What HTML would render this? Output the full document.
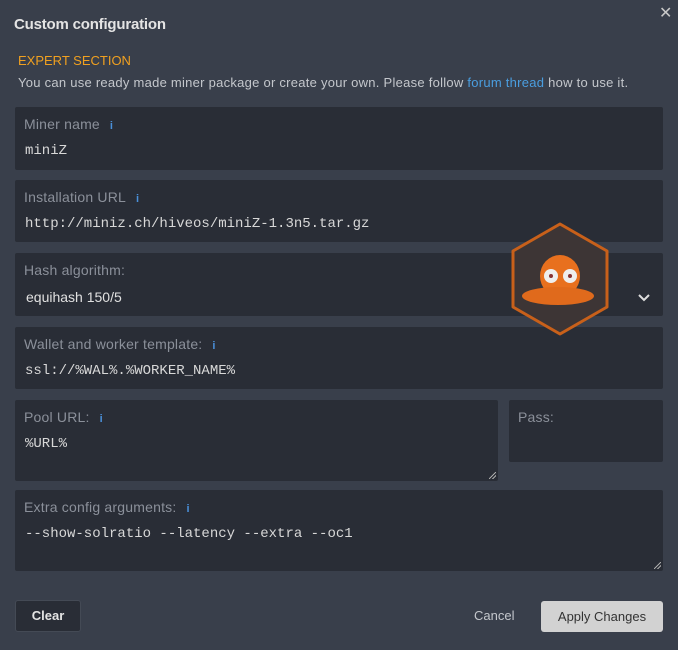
<!DOCTYPE html>
<html><head><meta charset="utf-8"><style>
*{margin:0;padding:0;box-sizing:border-box}
body{width:678px;height:650px;background:#393f4b;font-family:"Liberation Sans",sans-serif;position:relative;overflow:hidden;color:#ddd}
.a{position:absolute}
.f{position:absolute;background:#292d36;border-radius:2px}
.l{position:absolute;left:9px;top:9px;font-size:14px;color:#8b909a;letter-spacing:0.2px}
.l i{font-style:normal;color:#4a90d9;font-size:11px;margin-left:10px;font-weight:bold}
.v{position:absolute;left:10px;font-family:"Liberation Mono",monospace;font-size:14px;color:#d8d8d8}
.rs{position:absolute;right:2px;bottom:2px;width:7px;height:7px;background:linear-gradient(135deg,transparent 45%,#aaa 45%,#aaa 55%,transparent 55%,transparent 70%,#aaa 70%,#aaa 80%,transparent 80%)}
</style></head><body>
<div class="a" style="left:14px;top:16px;font-size:15px;font-weight:bold;color:#e4e4e4;letter-spacing:-0.2px">Custom configuration</div>
<div class="a" style="left:659px;top:3px;font-size:16px;color:#c8c8c8">✕</div>
<div class="a" style="left:18px;top:53px;font-size:13px;color:#f0a020">EXPERT SECTION</div>
<div class="a" style="left:18px;top:75px;font-size:13px;color:#c4c7cc;letter-spacing:0.26px">You can use ready made miner package or create your own. Please follow <span style="color:#4a9ee0">forum thread</span> how to use it.</div>

<div class="f" style="left:15px;top:107px;width:648px;height:63px"><div class="l">Miner name<i>i</i></div><div class="v" style="top:36px">miniZ</div></div>
<div class="f" style="left:15px;top:180px;width:648px;height:62px"><div class="l">Installation URL<i>i</i></div><div class="v" style="top:36px">http://miniz.ch/hiveos/miniZ-1.3n5.tar.gz</div></div>
<div class="f" style="left:15px;top:253px;width:648px;height:63px"><div class="l">Hash algorithm:</div><div class="a" style="left:11px;top:36px;font-size:14px;color:#e0e0e0">equihash 150/5</div>
<svg class="a" style="left:622px;top:40px" width="14" height="10"><path d="M2 2l5 5 5-5" stroke="#ddd" stroke-width="2" fill="none"/></svg></div>
<div class="f" style="left:15px;top:327px;width:648px;height:62px"><div class="l">Wallet and worker template:<i>i</i></div><div class="v" style="top:36px">ssl://%WAL%.%WORKER_NAME%</div></div>
<div class="f" style="left:15px;top:400px;width:483px;height:81px"><div class="l">Pool URL:<i>i</i></div><div class="v" style="top:36px">%URL%</div><div class="rs"></div></div>
<div class="f" style="left:509px;top:400px;width:154px;height:62px"><div class="l">Pass:</div></div>
<div class="f" style="left:15px;top:490px;width:648px;height:81px"><div class="l">Extra config arguments:<i>i</i></div><div class="v" style="top:36px">--show-solratio --latency --extra --oc1</div><div class="rs"></div></div>

<svg class="a" style="left:508px;top:221px" width="104" height="116"><polygon points="52,3 99,30 99,86 52,113 5,86 5,30" fill="#3d3535" stroke="#c8601a" stroke-width="3" stroke-linejoin="round"/>
<ellipse cx="52" cy="55" rx="20" ry="21" fill="#e8701e"/><ellipse cx="50" cy="75" rx="36" ry="9" fill="#e06a1c"/>
<circle cx="43" cy="55" r="7" fill="#eee"/><circle cx="62" cy="55" r="7" fill="#eee"/><circle cx="43" cy="55" r="2" fill="#833"/><circle cx="62" cy="55" r="2" fill="#833"/></svg>

<div class="a" style="left:15px;top:600px;width:66px;height:32px;background:#292d36;border:1px solid #444a55;border-radius:3px;font-size:13px;font-weight:bold;color:#e4e4e4;text-align:center;line-height:30px">Clear</div>
<div class="a" style="left:474px;top:608px;font-size:13px;color:#c4c7cc">Cancel</div>
<div class="a" style="left:541px;top:601px;width:122px;height:31px;background:#d2d2d2;border-radius:3px;font-size:13px;color:#333;text-align:center;line-height:31px">Apply Changes</div>
</body></html>
